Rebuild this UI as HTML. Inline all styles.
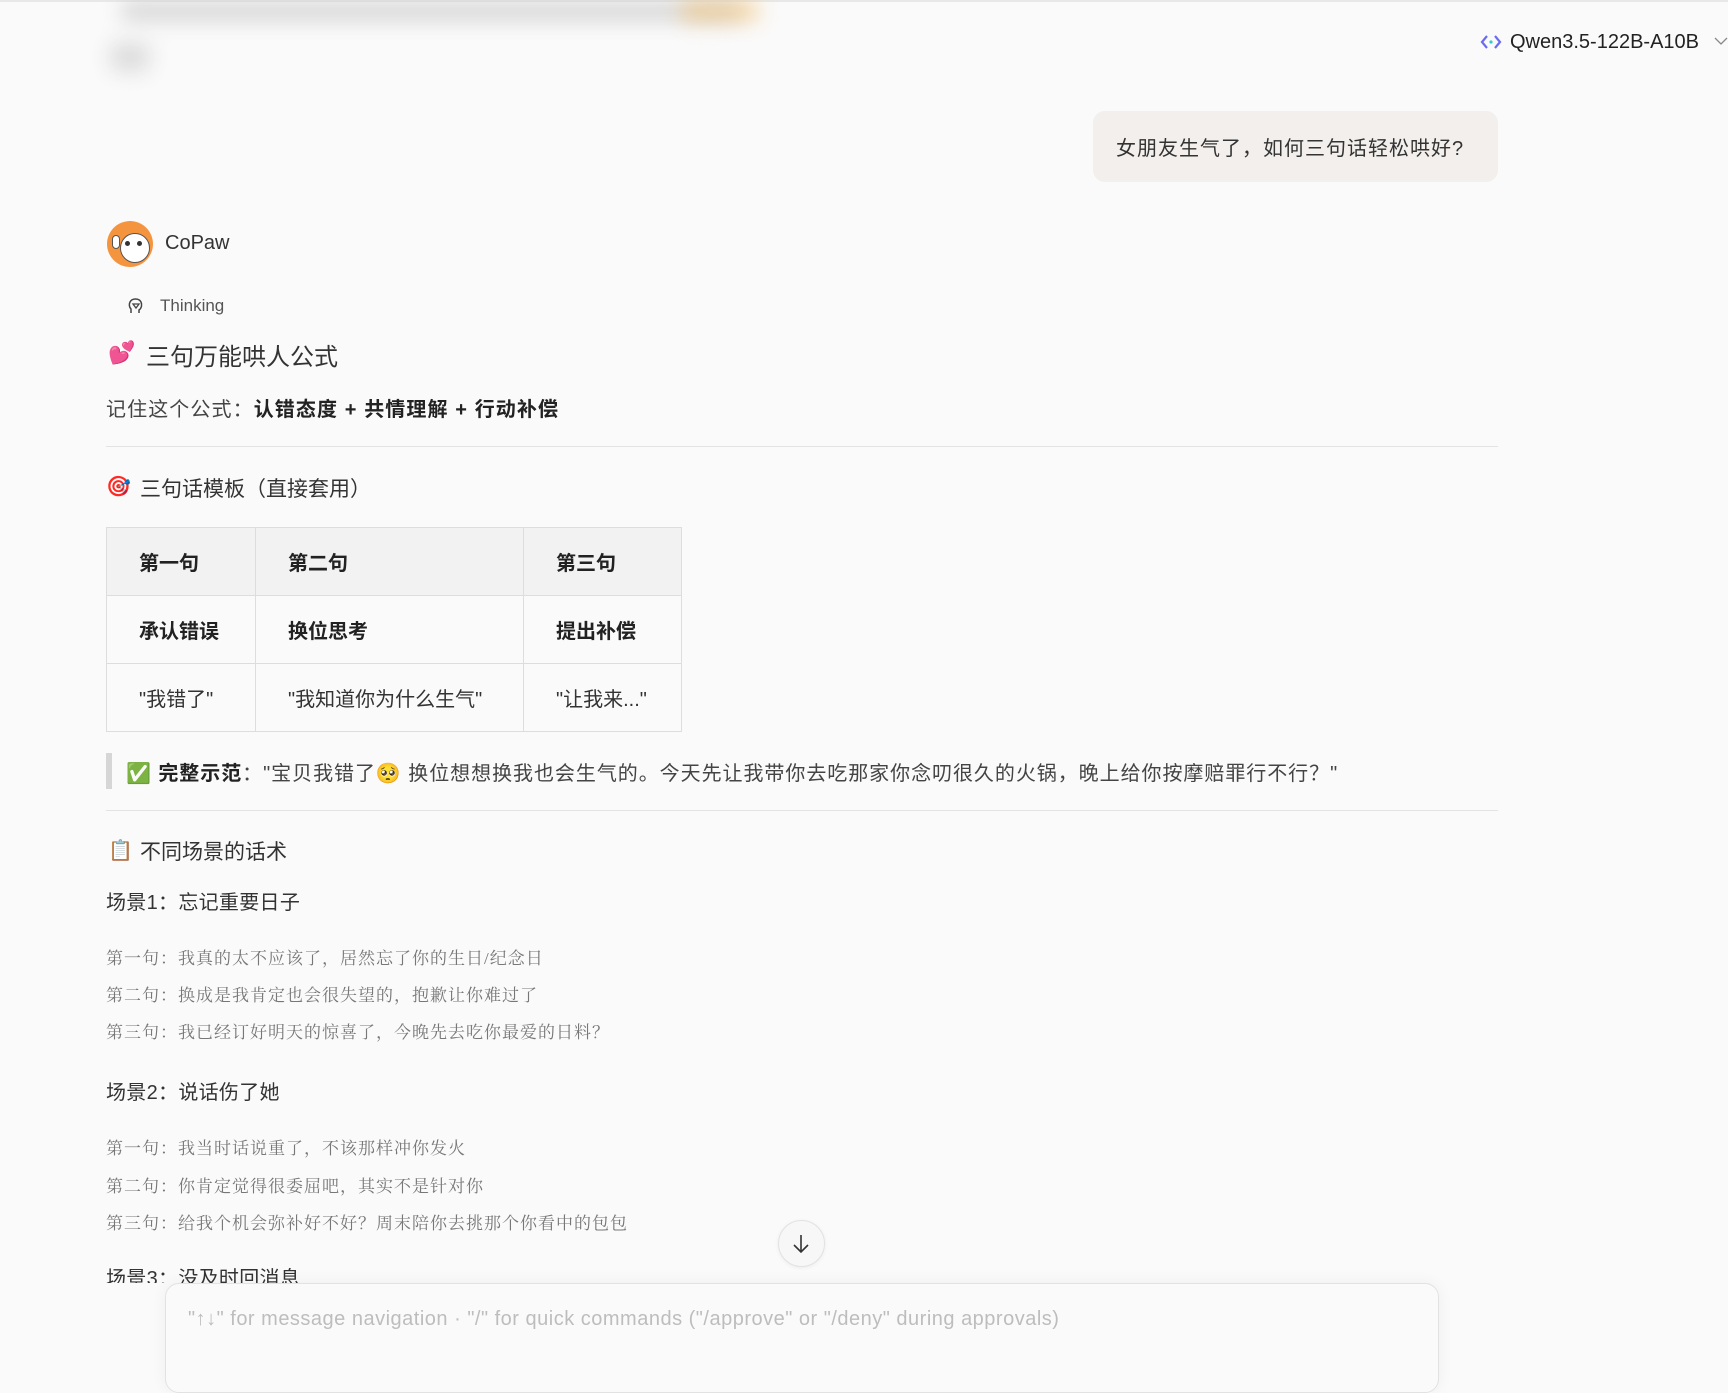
<!DOCTYPE html>
<html><head><meta charset="utf-8"><style>
*{margin:0;padding:0;box-sizing:border-box}
body{width:1728px;height:1368px;background:#fafafa;font-family:"Liberation Sans","Noto Sans CJK SC",sans-serif;color:#333;position:relative;overflow:hidden}
.a{position:absolute;white-space:nowrap}
.blur{position:absolute;filter:blur(10px);border-radius:10px}
table{border-collapse:collapse;position:absolute;left:106px;top:527px}
td{border:1px solid #ddd;height:68px;padding:0 32px;font-size:20px;color:#333;white-space:nowrap}
tr.h td{background:#f2f2f2}
b{font-weight:700;color:#222}
.s{font-family:"Liberation Serif","Noto Serif CJK SC",serif;font-size:17px;color:#777;letter-spacing:1px}
</style></head><body>
<div style="position:absolute;left:0;top:0;width:1728px;height:2px;background:#e8e8e8"></div>
<div class="blur" style="left:120px;top:0;width:620px;height:22px;background:#ccc;opacity:.7"></div>
<div class="blur" style="left:680px;top:0;width:80px;height:22px;background:#f3c47a;opacity:.6"></div>
<div class="blur" style="left:110px;top:42px;width:40px;height:30px;background:#ddd"></div>

<svg class="a" style="left:1480px;top:34px" width="22" height="16" viewBox="0 0 22 16"><path d="M7 2L2 8l5 6M15 2l5 6-5 6" stroke="#6b6bf0" stroke-width="2.2" fill="none"/><circle cx="11" cy="8" r="1.6" fill="#3cc"/></svg>
<div class="a" style="left:1510px;top:31px;font-size:20px;color:#222">Qwen3.5-122B-A10B</div>
<svg class="a" style="left:1714px;top:36px" width="14" height="10"><path d="M1 2l6 6 6-6" stroke="#888" stroke-width="1.3" fill="none"/></svg>

<div class="a" style="left:1093px;top:111px;width:405px;height:71px;background:#f2efec;border-radius:12px"></div>
<div class="a" style="left:1116px;top:132px;font-size:20px;color:#333;letter-spacing:1px">女朋友生气了，如何三句话轻松哄好?</div>

<div class="a" style="left:107px;top:221px;width:46px;height:46px;border-radius:50%;background:#f5943f;overflow:hidden">
<div style="position:absolute;left:13px;top:12px;width:30px;height:30px;background:#fff;border-radius:50%;border:1.5px solid #555"></div>
<div style="position:absolute;left:18px;top:20px;width:5px;height:5px;background:#333;border-radius:50%"></div>
<div style="position:absolute;left:30px;top:20px;width:5px;height:5px;background:#333;border-radius:50%"></div>
<div style="position:absolute;left:5px;top:14px;width:8px;height:14px;background:#fff;border:1.5px solid #555;border-radius:4px"></div>
</div>
<div class="a" style="left:165px;top:232px;font-size:20px;color:#333">CoPaw</div>

<svg class="a" style="left:126px;top:296px" width="20" height="20" viewBox="0 0 20 20"><path d="M5 17v-4C3 11 3 8 4 6c2-4 9-4 11 0 1 2 1 6-2 8v3" stroke="#444" stroke-width="1.5" fill="none"/><path d="M7 8h6l-3 4z" stroke="#444" stroke-width="1.3" fill="none"/></svg>
<div class="a" style="left:160px;top:296px;font-size:17px;color:#555">Thinking</div>

<div class="a" style="left:108px;top:340px;font-size:22px">💕</div>
<div class="a" style="left:146px;top:337px;font-size:24px;color:#333">三句万能哄人公式</div>
<div class="a" style="left:106px;top:393px;font-size:20px;color:#444;letter-spacing:1.1px">记住这个公式：<b>认错态度 + 共情理解 + 行动补偿</b></div>
<div class="a" style="left:106px;top:446px;width:1392px;height:1px;background:#e3e3e3"></div>

<div class="a" style="left:106px;top:474px;font-size:20px">🎯</div>
<div class="a" style="left:140px;top:473px;font-size:21px;color:#333">三句话模板（直接套用）</div>

<table>
<tr class="h"><td style="width:149px"><b>第一句</b></td><td style="width:268px"><b>第二句</b></td><td style="width:158px"><b>第三句</b></td></tr>
<tr><td><b>承认错误</b></td><td><b>换位思考</b></td><td><b>提出补偿</b></td></tr>
<tr><td>"我错了"</td><td>"我知道你为什么生气"</td><td>"让我来..."</td></tr>
</table>

<div class="a" style="left:106px;top:753px;width:6px;height:36px;background:#d6d6d6"></div>
<div class="a" style="left:126px;top:757px;font-size:20px;color:#444;letter-spacing:.95px">✅ <b>完整示范</b>："宝贝我错了🥺 换位想想换我也会生气的。今天先让我带你去吃那家你念叨很久的火锅，晚上给你按摩赔罪行不行？"</div>
<div class="a" style="left:106px;top:810px;width:1392px;height:1px;background:#e3e3e3"></div>

<div class="a" style="left:108px;top:838px;font-size:20px">📋</div>
<div class="a" style="left:140px;top:836px;font-size:21px;color:#333">不同场景的话术</div>
<div class="a" style="left:106px;top:886px;font-size:20px;color:#333;letter-spacing:.3px">场景1：忘记重要日子</div>
<div class="a s" style="left:106px;top:944px">第一句：我真的太不应该了，居然忘了你的生日/纪念日</div>
<div class="a s" style="left:106px;top:981px">第二句：换成是我肯定也会很失望的，抱歉让你难过了</div>
<div class="a s" style="left:106px;top:1018px">第三句：我已经订好明天的惊喜了，今晚先去吃你最爱的日料？</div>
<div class="a" style="left:106px;top:1076px;font-size:20px;color:#333;letter-spacing:.3px">场景2：说话伤了她</div>
<div class="a s" style="left:106px;top:1134px">第一句：我当时话说重了，不该那样冲你发火</div>
<div class="a s" style="left:106px;top:1172px">第二句：你肯定觉得很委屈吧，其实不是针对你</div>
<div class="a s" style="left:106px;top:1209px">第三句：给我个机会弥补好不好？周末陪你去挑那个你看中的包包</div>
<div class="a" style="left:106px;top:1266px;font-size:20px;color:#333;height:17px;overflow:hidden;line-height:26px;letter-spacing:.3px">场景3：没及时回消息</div>

<div class="a" style="left:778px;top:1220px;width:47px;height:47px;border-radius:50%;background:#f7f7f7;border:1px solid #e2e2e2;box-shadow:0 1px 4px rgba(0,0,0,.06)"></div>
<svg class="a" style="left:791px;top:1233px" width="20" height="22"><path d="M10 2v17M3 12l7 7 7-7" stroke="#333" stroke-width="1.6" fill="none"/></svg>

<div class="a" style="left:165px;top:1283px;width:1274px;height:110px;background:#fafafa;border:1px solid #e2e2e2;border-radius:14px;box-shadow:0 0 16px rgba(0,0,0,.05)"></div>
<div class="a" style="left:188px;top:1308px;font-size:20px;color:#bdbdbd;letter-spacing:.5px">"↑↓" for message navigation · "/" for quick commands ("/approve" or "/deny" during approvals)</div>
</body></html>
